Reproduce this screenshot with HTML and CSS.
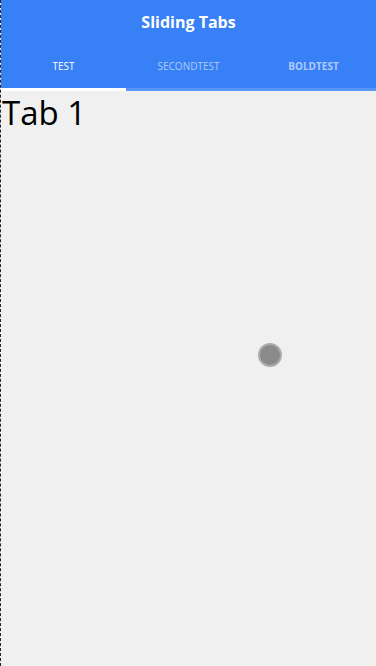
FILE: index.html
```html
<!DOCTYPE html>
<html lang="en">
<head>
  <meta charset="UTF-8" />
  <meta name="viewport" content="width=device-width, initial-scale=1.0" />
  <title>Sliding Tabs</title>
  <link rel="stylesheet" href="styles.css">
</head>
<body>
  <div class="app">
    <header class="toolbar">
      <h1>Sliding Tabs</h1>
      <nav class="tabs">
        <div class="tab active">TEST</div>
        <div class="tab">SECONDTEST</div>
        <div class="tab bold">BOLDTEST</div>
      </nav>
      <div class="indicator"><span></span></div>
    </header>
    <main class="page">
      <h2>Tab 1</h2>
      <div class="touch"></div>
    </main>
  </div>
</body>
</html>
```

FILE: styles.css
```css
html, body {
  margin: 0;
  padding: 0;
  height: 100%;
}
body {
  font-family: "Open Sans", "Noto Sans", sans-serif;
  background-color: #f0f0f0;
}
.app {
  height: 100%;
  display: flex;
  flex-direction: column;
  border-left: 1px dashed #222;
  box-sizing: border-box;
}
.toolbar {
  background-color: #3780f6;
  color: white;
}
.toolbar h1 {
  margin: 0;
  height: 44px;
  line-height: 44px;
  text-align: center;
  font-size: 16px;
  font-weight: 700;
}
.tabs {
  display: flex;
  height: 44px;
}
.tab {
  flex: 1;
  display: flex;
  align-items: center;
  justify-content: center;
  font-size: 10px;
  color: rgba(255,255,255,0.6);
}
.tab.active {
  color: white;
}
.tab.bold {
  font-weight: 700;
}
.indicator {
  height: 3px;
  background-color: #5896f8;
}
.indicator span {
  display: block;
  width: 125px;
  height: 3px;
  background: white;
}
.page {
  flex: 1;
  position: relative;
}
.page h2 {
  margin: 0;
  padding-left: 1px;
  font-size: 33px;
  font-weight: 500;
  line-height: 44px;
  color: #000;
}
.touch {
  position: absolute;
  left: 257px;
  top: 252px;
  width: 20px;
  height: 20px;
  border-radius: 50%;
  background: #8a8a8a;
  border: 2px solid #acacac;
}
```
